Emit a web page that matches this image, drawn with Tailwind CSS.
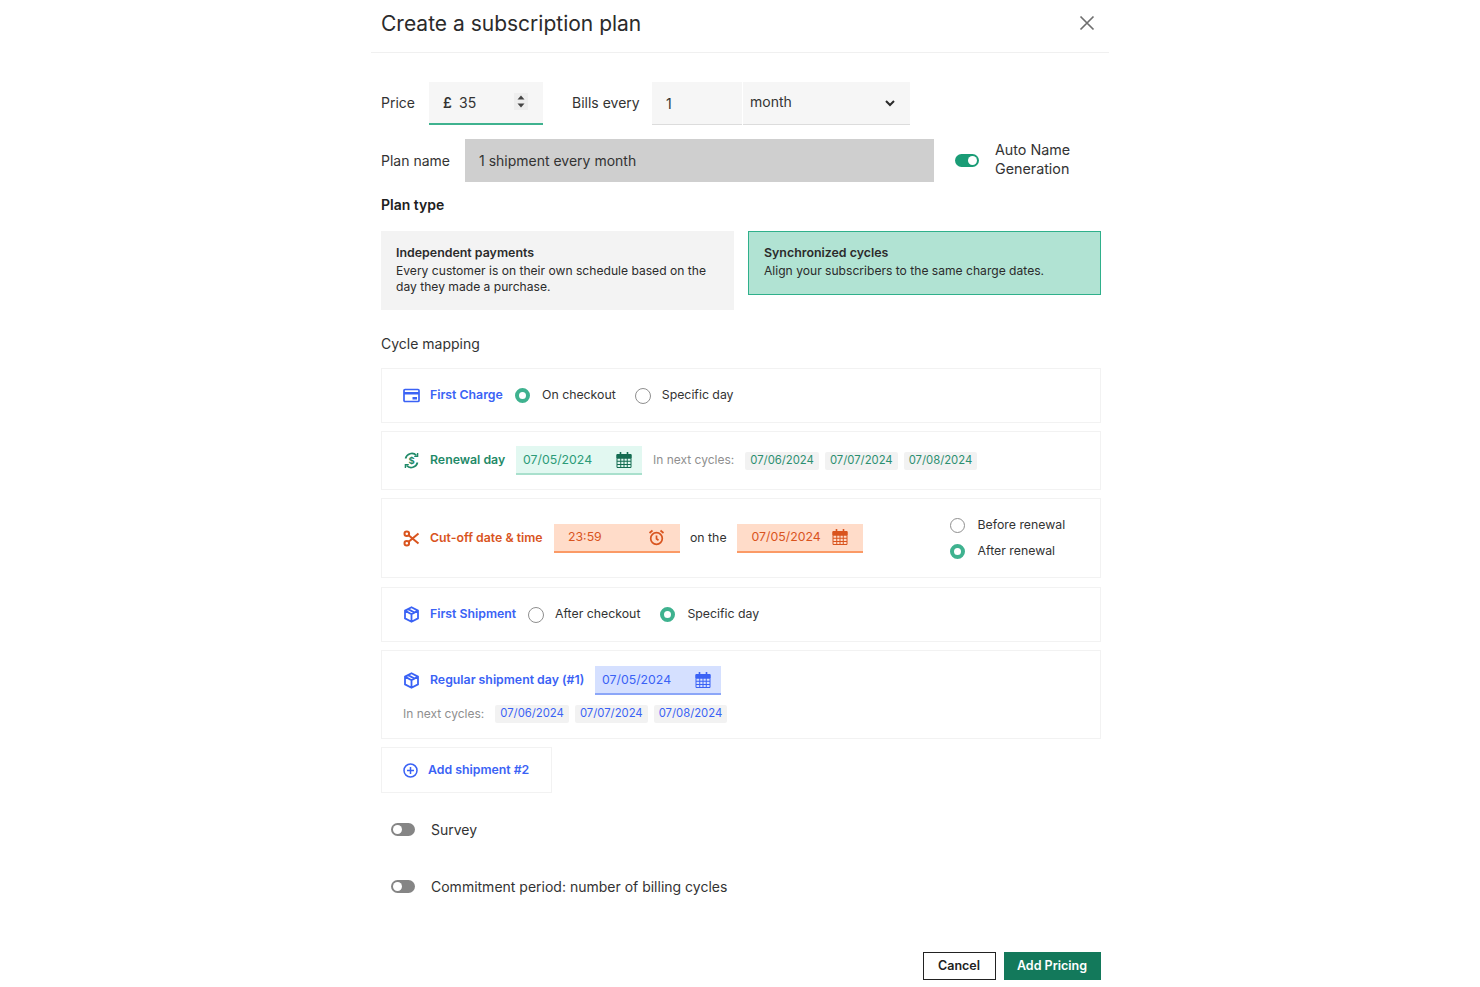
<!DOCTYPE html>
<html lang="en">
  <head>
    <meta charset="UTF-8" />
    <meta name="viewport" content="width=device-width, initial-scale=1.0" />
    <title>Create a subscription plan</title>
    <script src="https://cdn.jsdelivr.net/npm/@tailwindcss/browser@4"></script>
  </head>
  <body class="bg-white h-[987px] overflow-hidden font-['Inter',sans-serif] text-[#333333]">
    <div class="w-[738px] ml-[371px]">
      <!-- header -->
      <div class="h-[53px] border-b border-[#f0f0f0] pl-[10px] pr-[13px] pb-[5px] flex items-center justify-between">
        <h1 class="text-[21px] text-[#2b2b2b] leading-none">Create a subscription plan</h1>
        <svg class="w-[18px] h-[18px] text-[#6f6f6f] -mt-[1px]" viewBox="0 0 18 18" fill="none" stroke="currentColor" stroke-width="1.7"><path d="M2.5 2.5l13 13M15.5 2.5l-13 13" /></svg>
      </div>

      <div class="pl-[10px] pr-[8.5px]">
        <!-- price row -->
        <div class="mt-[29px] flex items-center h-[43px] text-[14px]">
          <span class="w-[48px] -mt-[2px]">Price</span>
          <div class="w-[114px] h-full bg-[#f6f6f6] border-b-2 border-[#3fb28f] flex items-center pl-[14px] pr-[15px]">
            <span class="font-semibold w-[16px]">£</span><span class="flex-1">35</span>
            <svg class="w-[14px] h-[17px] bg-[#eeeeee] -mt-[2px]" viewBox="0 0 14 17" fill="#444"><path d="M7 2.5l3.5 4h-7zM7 14.5l-3.5-4h7z" /></svg>
          </div>
          <span class="ml-[29px] w-[80px] -mt-[2px]">Bills every</span>
          <div class="w-[90px] h-full bg-[#f6f6f6] border-b border-[#dcdcdc] pl-[14px] flex items-center">1</div>
          <div class="ml-[1px] w-[167px] h-full bg-[#f6f6f6] border-b border-[#dcdcdc] pl-[7px] pr-[14px] flex items-center justify-between">
            <span class="-mt-[3px]">month</span>
            <svg class="w-[12px] h-[12px]" viewBox="0 0 12 12" fill="none" stroke="#2b2b2b" stroke-width="2"><path d="M2 4l4 4 4-4" /></svg>
          </div>
        </div>

        <!-- plan name row -->
        <div class="mt-[14px] flex items-center h-[43px] text-[14px]">
          <span class="w-[84px] -mt-[1px]">Plan name</span>
          <div class="w-[469px] h-full bg-[#cfcfcf] pl-[14px] flex items-center">1 shipment every month</div>
          <span class="ml-[21px] w-[24px] h-[13px] rounded-full bg-[#1a9c76] relative shrink-0">
            <span class="absolute right-[2px] top-[2px] w-[9px] h-[9px] rounded-full bg-white"></span>
          </span>
          <span class="ml-[16px] leading-[19px] -mt-[3px] text-[14.3px]">Auto Name<br />Generation</span>
        </div>

        <p class="mt-[13px] text-[14px] font-semibold text-[#202020] leading-[20px]">Plan type</p>

        <!-- plan type cards -->
        <div class="mt-[16px] flex items-start gap-[14px] text-[12.1px] leading-[16px] text-[#2b2b2b]">
          <div class="w-[353px] shrink-0 h-[79px] bg-[#f3f3f3] pl-[15px] pr-[15px] pt-[14px]">
            <p class="font-semibold text-[12.4px]">Independent payments</p>
            <p class="mt-[2px]">Every customer is on their own schedule based on the day they made a purchase.</p>
          </div>
          <div class="flex-1 h-[64px] bg-[#b1e3d3] border border-[#2fb08b] pl-[15px] pr-[15px] pt-[13px]">
            <p class="font-semibold text-[12.4px]">Synchronized cycles</p>
            <p class="mt-[2px]">Align your subscribers to the same charge dates.</p>
          </div>
        </div>

        <p class="mt-[24px] text-[14px] leading-[20px]">Cycle mapping</p>

        <div class="mt-[14px] flex flex-col gap-[8px] text-[12.3px]">
          <!-- first charge -->
          <div class="h-[55px] border border-[#f2f2f2] pl-[21px] flex items-center">
            <svg class="w-[17px] h-[17px] text-[#3a62f5]" viewBox="0 0 17 17" fill="none"><rect x="1" y="2.5" width="15" height="12" rx="1" stroke="currentColor" stroke-width="1.7" /><path d="M1 5h15v2.5H1z" fill="currentColor" /><path d="M9.5 10h4.5v2.5H9.5z" fill="currentColor" /></svg>
            <span class="ml-[10px] w-[85px] font-semibold text-[#3a62f5]">First Charge</span>
            <span class="w-[15px] h-[15px] rounded-full border-[4px] border-[#3fb28f]"></span>
            <span class="ml-[12px]">On checkout</span>
            <span class="ml-[19px] w-[16px] h-[16px] rounded-full border-[1.5px] border-[#8f8f8f]"></span>
            <span class="ml-[11px]">Specific day</span>
          </div>

          <!-- renewal day -->
          <div class="h-[59px] border border-[#f2f2f2] pl-[21px] flex items-center">
            <svg class="w-[17px] h-[17px] text-[#1f8a68]" viewBox="0 0 17 17" fill="none" stroke="currentColor" stroke-width="1.7"><path d="M2.5 6.5a6.5 6.5 0 0 1 11-3M14.5 10.5a6.5 6.5 0 0 1-11 3" /><path d="M14.6 1v3.4h-3.4M2.4 16v-3.4h3.4" stroke-width="1.4" /><text x="8.5" y="12" text-anchor="middle" font-size="9.5" font-weight="700" fill="currentColor" stroke="none">$</text></svg>
            <span class="ml-[10px] w-[86px] font-semibold text-[#1f8a68]">Renewal day</span>
            <div class="w-[126px] h-[29px] bg-[#e2f8f1] border-b-2 border-[#a9e0cd] pl-[7px] pr-[10px] flex items-center justify-between text-[12.3px] text-[#2c9b78]">
              <span class="mt-[2px]">07/05/2024</span>
              <svg class="w-[16px] h-[16px] text-[#146c52]" viewBox="0 0 16 16" fill="none" stroke="currentColor"><path d="M1 2.5h14v13H1zM1 6h14M1 9.25h14M1 12.5h14M4.75 6v9.5M8 6v9.5M11.25 6v9.5" /><path d="M4.5 0v3M11.5 0v3" stroke-width="1.6" /><path d="M1 2.5h14V6H1z" fill="currentColor" /></svg>
            </div>
            <span class="ml-[11px] text-[#8f8f8f] text-[12px] -mt-[1px]">In next cycles:</span>
            <div class="ml-[11px] flex gap-[6px] text-[#2c8f70] text-[11.3px]">
              <span class="h-[18px] px-[5px] bg-[#f2f2f2] rounded-[2px] leading-[17px]">07/06/2024</span>
              <span class="h-[18px] px-[5px] bg-[#f2f2f2] rounded-[2px] leading-[17px]">07/07/2024</span>
              <span class="h-[18px] px-[5px] bg-[#f2f2f2] rounded-[2px] leading-[17px]">07/08/2024</span>
            </div>
          </div>

          <!-- cut-off -->
          <div class="h-[80px] border border-[#f2f2f2] pl-[21px] flex items-center">
            <svg class="w-[17px] h-[17px] text-[#d9541e]" viewBox="0 0 17 17" fill="none" stroke="currentColor" stroke-width="2"><circle cx="3.8" cy="3.8" r="2.3" /><circle cx="3.8" cy="13.2" r="2.3" /><path d="M5.6 5.2L15.5 13.5M5.6 11.8L15.5 3.5" /></svg>
            <span class="ml-[10px] w-[124px] font-semibold text-[#d9541e] whitespace-nowrap">Cut-off date &amp; time</span>
            <div class="w-[126px] h-[29px] bg-[#ffdcc9] border-b-2 border-[#fb9a66] pl-[14px] pr-[15px] flex items-center justify-between text-[12.3px] text-[#d9541e]">
              <span class="mt-[1px]">23:59</span>
              <svg class="w-[17px] h-[17px]" viewBox="0 0 17 17" fill="none" stroke="currentColor" stroke-width="1.7"><circle cx="8.5" cy="9.5" r="5.8" /><path d="M8.5 6.5v3.3l2 1.4M1.5 4L4.5 1.5M15.5 4l-3-2.5" /></svg>
            </div>
            <span class="ml-[10px]">on the</span>
            <div class="ml-[10px] w-[126px] h-[29px] bg-[#ffdcc9] border-b-2 border-[#fb9a66] pl-[15px] pr-[15px] flex items-center justify-between text-[12.3px] text-[#d9541e]">
              <span class="mt-[1px]">07/05/2024</span>
              <svg class="w-[16px] h-[16px]" viewBox="0 0 16 16" fill="none" stroke="currentColor"><path d="M1 2.5h14v13H1zM1 6h14M1 9.25h14M1 12.5h14M4.75 6v9.5M8 6v9.5M11.25 6v9.5" /><path d="M4.5 0v3M11.5 0v3" stroke-width="1.6" /><path d="M1 2.5h14V6H1z" fill="currentColor" /></svg>
            </div>
            <div class="ml-[87px] flex flex-col gap-[10px] mt-[1px]">
              <div class="flex items-center gap-[13px] h-[16px]">
                <span class="w-[15px] h-[15px] rounded-full border-[1.5px] border-[#8f8f8f]"></span>
                <span>Before renewal</span>
              </div>
              <div class="flex items-center gap-[13px] h-[16px]">
                <span class="w-[15px] h-[15px] rounded-full border-[4px] border-[#3fb28f]"></span>
                <span>After renewal</span>
              </div>
            </div>
          </div>

          <!-- first shipment -->
          <div class="mt-[1px] h-[55px] border border-[#f2f2f2] pl-[21px] flex items-center">
            <svg class="w-[17px] h-[17px] text-[#3a62f5]" viewBox="0 0 17 17" fill="none" stroke="currentColor" stroke-width="1.8" stroke-linejoin="round"><path d="M8.5 1.2l6.5 3.4v7.8l-6.5 3.4L2 12.4V4.6zM2 4.6l6.5 3.6L15 4.6M8.5 8.2v7.6M5 3l6.5 3.6" /></svg>
            <span class="ml-[10px] w-[98px] font-semibold text-[#3a62f5] -mt-[1px]">First Shipment</span>
            <span class="w-[16px] h-[16px] rounded-full border-[1.5px] border-[#8f8f8f]"></span>
            <span class="ml-[11px] -mt-[1px]">After checkout</span>
            <span class="ml-[20px] w-[15px] h-[15px] rounded-full border-[4px] border-[#3fb28f]"></span>
            <span class="ml-[12px] -mt-[1px]">Specific day</span>
          </div>

          <!-- regular shipment -->
          <div class="h-[89px] border border-[#f2f2f2] pl-[21px] pt-[15px]">
            <div class="flex items-center">
              <svg class="w-[17px] h-[17px] text-[#3a62f5]" viewBox="0 0 17 17" fill="none" stroke="currentColor" stroke-width="1.8" stroke-linejoin="round"><path d="M8.5 1.2l6.5 3.4v7.8l-6.5 3.4L2 12.4V4.6zM2 4.6l6.5 3.6L15 4.6M8.5 8.2v7.6M5 3l6.5 3.6" /></svg>
              <span class="ml-[10px] w-[165px] font-semibold text-[#3a62f5] whitespace-nowrap -mt-[1px]">Regular shipment day (#1)</span>
              <div class="w-[126px] h-[29px] bg-[#d5e0ff] border-b-2 border-[#8ba6f8] pl-[7px] pr-[10px] flex items-center justify-between text-[12.3px] text-[#3a62f5]">
                <span class="mt-[2px]">07/05/2024</span>
                <svg class="w-[16px] h-[16px]" viewBox="0 0 16 16" fill="none" stroke="currentColor"><path d="M1 2.5h14v13H1zM1 6h14M1 9.25h14M1 12.5h14M4.75 6v9.5M8 6v9.5M11.25 6v9.5" /><path d="M4.5 0v3M11.5 0v3" stroke-width="1.6" /><path d="M1 2.5h14V6H1z" fill="currentColor" /></svg>
              </div>
            </div>
            <div class="mt-[10px] flex items-center">
              <span class="text-[#8f8f8f] text-[12px]">In next cycles:</span>
              <div class="ml-[11px] flex gap-[6px] text-[#3a62f5] text-[11.3px]">
                <span class="h-[18px] px-[5px] bg-[#f2f2f2] rounded-[2px] leading-[17px]">07/06/2024</span>
                <span class="h-[18px] px-[5px] bg-[#f2f2f2] rounded-[2px] leading-[17px]">07/07/2024</span>
                <span class="h-[18px] px-[5px] bg-[#f2f2f2] rounded-[2px] leading-[17px]">07/08/2024</span>
              </div>
            </div>
          </div>

          <!-- add shipment -->
          <div class="w-[171px] h-[46px] border border-[#f2f2f2] pl-[21px] flex items-center">
            <svg class="w-[15px] h-[15px] text-[#3a62f5]" viewBox="0 0 15 15" fill="none" stroke="currentColor" stroke-width="1.5"><circle cx="7.5" cy="7.5" r="6.5" /><path d="M7.5 4v7M4 7.5h7" /></svg>
            <span class="ml-[10px] font-semibold text-[#3a62f5]">Add shipment #2</span>
          </div>
        </div>

        <!-- toggles -->
        <div class="mt-[26px] pl-[10px] flex items-center gap-[16px] h-[20px] text-[14px]">
          <span class="w-[24px] h-[13px] rounded-full bg-[#858585] relative shrink-0">
            <span class="absolute left-[2px] top-[2px] w-[9px] h-[9px] rounded-full bg-white"></span>
          </span>
          <span>Survey</span>
        </div>
        <div class="mt-[37px] pl-[10px] flex items-center gap-[16px] h-[20px] text-[14px]">
          <span class="w-[24px] h-[13px] rounded-full bg-[#858585] relative shrink-0">
            <span class="absolute left-[2px] top-[2px] w-[9px] h-[9px] rounded-full bg-white"></span>
          </span>
          <span>Commitment period: number of billing cycles</span>
        </div>

        <!-- footer -->
        <div class="mt-[56px] flex justify-end gap-[8px] text-[12.5px] font-semibold">
          <button class="w-[73px] h-[28px] border border-[#222] bg-white text-[#222]">Cancel</button>
          <button class="w-[97px] h-[28px] bg-[#13795b] text-white">Add Pricing</button>
        </div>
      </div>
    </div>
  </body>
</html>
